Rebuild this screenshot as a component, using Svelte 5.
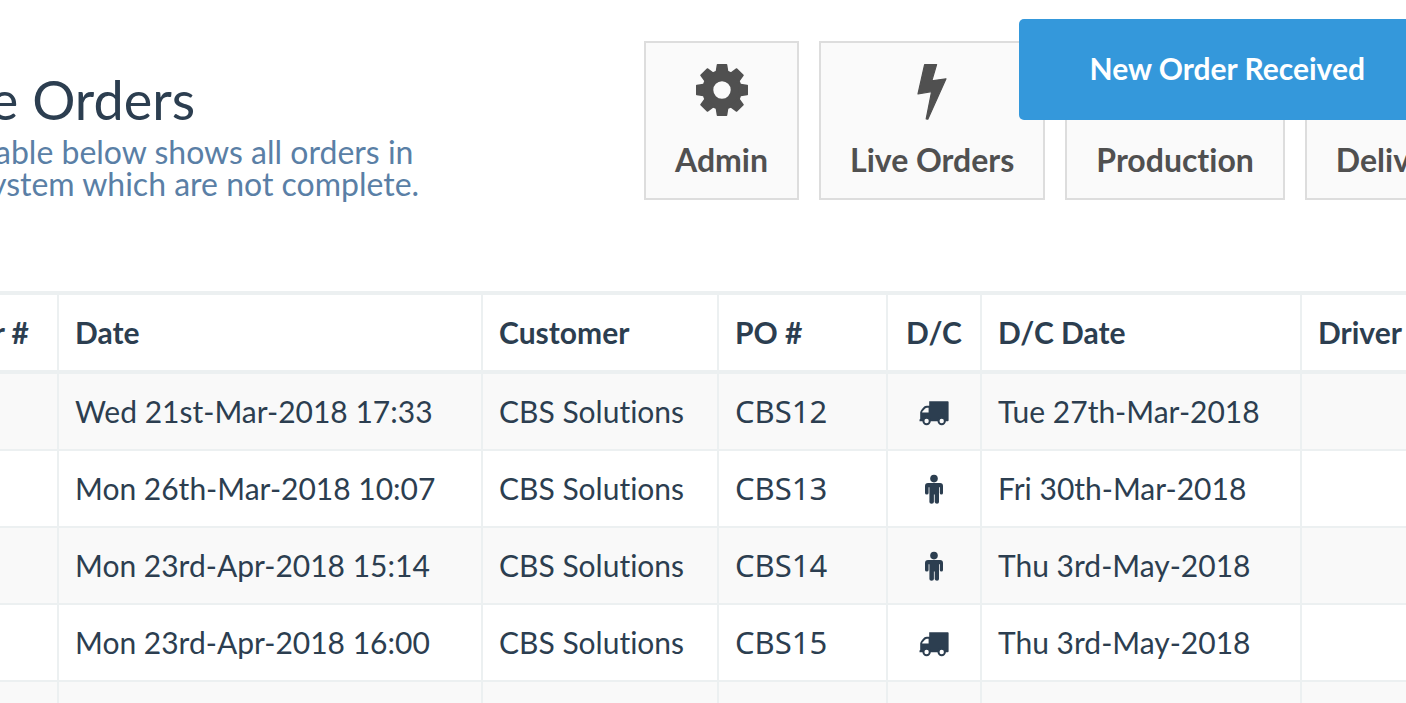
<script lang="ts">
  type Method = "delivery" | "collection";

  interface Order {
    id: number | null;
    date: string;
    customer: string;
    po: string;
    method: Method | null;
    dueDate: string;
  }

  const menu = [
    { label: "Admin", icon: "gear" },
    { label: "Live Orders", icon: "bolt" },
    { label: "Production", icon: "gear" },
    { label: "Delivery", icon: "bolt" },
  ];

  const orders: Order[] = [
    { id: 12, date: "Wed 21st-Mar-2018 17:33", customer: "CBS Solutions", po: "CBS12", method: "delivery", dueDate: "Tue 27th-Mar-2018" },
    { id: 13, date: "Mon 26th-Mar-2018 10:07", customer: "CBS Solutions", po: "CBS13", method: "collection", dueDate: "Fri 30th-Mar-2018" },
    { id: 14, date: "Mon 23rd-Apr-2018 15:14", customer: "CBS Solutions", po: "CBS14", method: "collection", dueDate: "Thu 3rd-May-2018" },
    { id: 15, date: "Mon 23rd-Apr-2018 16:00", customer: "CBS Solutions", po: "CBS15", method: "delivery", dueDate: "Thu 3rd-May-2018" },
    { id: null, date: "", customer: "", po: "", method: null, dueDate: "" },
  ];

  const teeth = [0, 45, 90, 135, 180, 225, 270, 315];
</script>

<div class="viewport">
  <div class="page">
    <header class="top">
      <div class="intro">
        <h1>Live Orders</h1>
        <p>The table below shows all orders in the system which are not complete.</p>
      </div>
      <nav class="menu">
        {#each menu as item}
          <button type="button" class="tile">
            <svg class="tile-icon" viewBox="0 0 56 56" aria-hidden="true">
              {#if item.icon === "gear"}
                <g transform="translate(28 26)">
                  <circle r="14.3" fill="none" stroke="currentColor" stroke-width="11.2" />
                  {#each teeth as angle}
                    <path
                      d="M-4.5 -25.2H4.5L5.8 -17H-5.8Z"
                      stroke="currentColor"
                      stroke-width="1.6"
                      stroke-linejoin="round"
                      transform="rotate({angle})"
                    />
                  {/each}
                </g>
              {:else}
                <path
                  d="M20.6 .6H32.6L27.8 16.8L42 14.8L23.8 55.2L22.2 54.8L27.6 27.6L14 30Z"
                  stroke="currentColor"
                  stroke-width="1.2"
                  stroke-linejoin="round"
                />
              {/if}
            </svg>
            {item.label}
          </button>
        {/each}
      </nav>
    </header>

    <table class="orders">
      <colgroup>
        <col class="col-id" />
        <col class="col-date" />
        <col class="col-customer" />
        <col class="col-po" />
        <col class="col-method" />
        <col class="col-due" />
        <col />
      </colgroup>
      <thead>
        <tr>
          <th class="id">Order #</th>
          <th>Date</th>
          <th>Customer</th>
          <th>PO #</th>
          <th class="center">D/C</th>
          <th>D/C Date</th>
          <th>Driver</th>
        </tr>
      </thead>
      <tbody>
        {#each orders as order}
          <tr>
            <td></td>
            <td>{order.date}</td>
            <td>{order.customer}</td>
            <td class="po">{order.po}</td>
            <td class="center">
              {#if order.method === "delivery"}
                <svg class="method" viewBox="0 0 30 30" role="img" aria-label="Delivery">
                  <path
                    fill-rule="evenodd"
                    d="M10.2 4.2H28.8Q29.6 4.2 29.6 5V23.2Q29.6 24.2 28.6 24.2H.5V22.4L1.2 22V15.2Q1.5 13.8 3 12L5.2 9.6Q6.2 8.7 7.8 8.7H10.2ZM9.6 10.8H8Q7 10.8 6.2 11.6L3.2 14.8V15.4H9.6Z"
                  />
                  <circle class="wheel" cx="7.6" cy="24" r="3.2" />
                  <circle class="wheel" cx="22.7" cy="24" r="3.2" />
                </svg>
              {:else if order.method === "collection"}
                <svg class="method" viewBox="0 0 30 30" role="img" aria-label="Collection">
                  <circle cx="15" cy="4.6" r="3.8" />
                  <path
                    d="M9 9H21Q24 9 24 12V19Q24 20.6 22.4 20.6T20.8 19V13.2H20V28Q20 29.8 18 29.8T15.7 28V20.5H14.9V28Q14.9 29.8 12.6 29.8T10.4 28V13.2H9.6V19Q9.6 20.6 7.8 20.6T6 19V12Q6 9 9 9Z"
                  />
                </svg>
              {/if}
            </td>
            <td>{order.dueDate}</td>
            <td></td>
          </tr>
        {/each}
      </tbody>
    </table>
  </div>

  <div class="toast" role="status">New Order Received</div>
</div>

<style>
  :global(body) {
    background: #fff;
  }

  .viewport {
    position: relative;
    height: 100vh;
    overflow: hidden;
    font-family: Lato, sans-serif;
    font-size: 30px;
    font-variant-ligatures: none;
    line-height: 43px;
    color: #2c3e50;
  }

  .page {
    margin-left: -78px;
    padding-top: 41px;
  }

  .top {
    display: flex;
    align-items: flex-start;
    margin-bottom: 91px;
  }

  .intro {
    flex: 0 0 722px;
    padding-top: 31px;
  }

  h1 {
    margin: 0;
    font-size: 54px;
    font-weight: 400;
    line-height: 56px;
  }

  p {
    max-width: 520px;
    margin: 8px 0 0;
    font-size: 32px;
    line-height: 32px;
    color: #5a7fa6;
  }

  .menu {
    display: flex;
    gap: 20px;
  }

  .tile {
    display: flex;
    flex-direction: column;
    align-items: center;
    gap: 18px;
    flex: none;
    padding: 21px 29px 16px;
    border: 2px solid #ddd;
    background: #fafafa;
    color: #505050;
    font-family: inherit;
    font-size: 32px;
    font-variant-ligatures: none;
    font-weight: 700;
    line-height: 44px;
    white-space: nowrap;
    cursor: pointer;
  }

  .tile-icon {
    width: 56px;
    height: 56px;
    fill: currentColor;
  }

  .orders {
    width: 100%;
    table-layout: fixed;
    border-collapse: separate;
    border-spacing: 0;
  }

  .col-id {
    width: 135px;
  }

  .col-date {
    width: 424px;
  }

  .col-customer {
    width: 236px;
  }

  .col-po {
    width: 169px;
  }

  .col-method {
    width: 94px;
  }

  .col-due {
    width: 320px;
  }

  th,
  td {
    height: 43px;
    padding: 16px;
    border-left: 2px solid #ecf0f1;
    text-align: left;
    white-space: nowrap;
  }

  th {
    border-top: 4px solid #ecf0f1;
    border-bottom: 4px solid #ecf0f1;
    font-weight: 700;
  }

  td {
    border-bottom: 2px solid #ecf0f1;
  }

  tbody tr:nth-child(odd) {
    background: #f9f9f9;
  }

  th.id {
    padding-right: 28px;
    padding-left: 0;
    text-align: right;
  }

  th.center,
  td.center {
    text-align: center;
  }

  td.po {
    font-family: "Noto Sans", sans-serif;
    font-size: 31px;
  }

  .method {
    display: block;
    width: 30px;
    height: 30px;
    margin: 0 auto;
    fill: currentColor;
  }

  .wheel {
    fill: #f9f9f9;
    stroke: currentColor;
    stroke-width: 2;
  }

  tr:nth-child(even) .wheel {
    fill: #fff;
  }

  .toast {
    position: absolute;
    top: 19px;
    right: 0;
    padding: 28px 41px 30px 71px;
    border-radius: 5px 0 0 5px;
    background: #3498db;
    color: #fff;
    font-weight: 700;
  }
</style>
